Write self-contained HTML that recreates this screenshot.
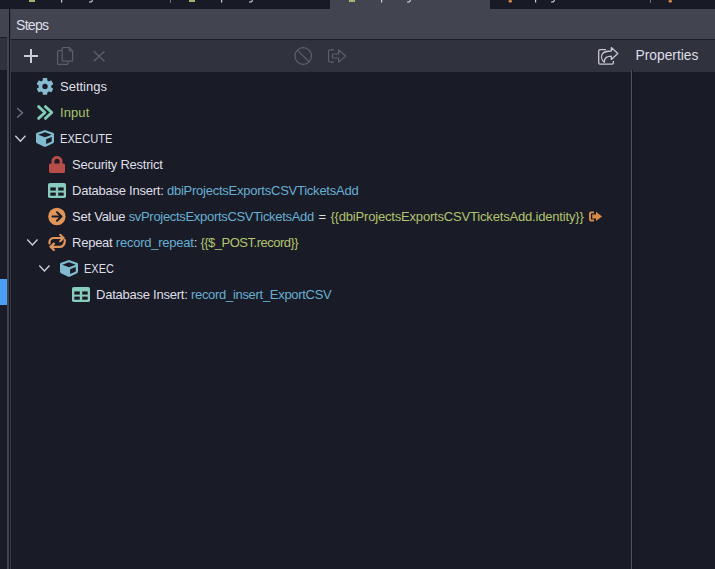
<!DOCTYPE html>
<html><head><meta charset="utf-8">
<style>
*{margin:0;padding:0;box-sizing:border-box}
html,body{width:715px;height:569px;overflow:hidden;background:#191b26;font-family:"Liberation Sans",sans-serif;font-size:13px;color:#e2e2ea}
.abs{position:absolute}
#tabs{left:0;top:0;width:715px;height:9px;background:#181a25;overflow:hidden}
#atab{left:330px;top:0;width:160px;height:9px;background:#42444f}
#lhead{left:0;top:9px;width:7px;height:28px;background:#42444f}
#lline{left:0;top:37px;width:7px;height:1px;background:#1c1d27}
#ltool{left:0;top:38px;width:7px;height:32px;background:#30323e}
#split1{left:7px;top:9px;width:2px;height:560px;background:#42444f}
#split2{left:9px;top:9px;width:1px;height:560px;background:#15161f}
#split3{left:10px;top:9px;width:1px;height:560px;background:#373945}
#head{left:11px;top:9px;width:704px;height:30px;background:#42444f}
#hline{left:11px;top:39px;width:704px;height:1px;background:#1c1d27}
#tool{left:11px;top:40px;width:704px;height:32px;background:#30323e}
#ptool{left:631px;top:40px;width:84px;height:30px;background:#30323e}
#pline{left:631px;top:70px;width:1px;height:499px;background:#50525e}
#pline2{left:632px;top:70px;width:1px;height:499px;background:#15161f}
#bluebar{left:0;top:279px;width:7px;height:26px;background:#4a9ff5}
.t{position:absolute;white-space:nowrap;line-height:16px;letter-spacing:-0.24px}
.w{color:#dfdfe7}
.b{color:#68afd3}
.y{color:#b3c46e}
.g{color:#a8c46c}
svg{position:absolute;left:0;top:0}
</style></head><body>
<div id="tabs" class="abs"></div>
<div id="atab" class="abs"></div>
<div id="lhead" class="abs"></div>
<div id="lline" class="abs"></div>
<div id="ltool" class="abs"></div>
<div id="bluebar" class="abs"></div>
<div id="split1" class="abs"></div>
<div id="split2" class="abs"></div>
<div id="split3" class="abs"></div>
<div id="head" class="abs"></div>
<div id="hline" class="abs"></div>
<div id="tool" class="abs"></div>
<div id="ptool" class="abs"></div>
<div id="pline" class="abs"></div>
<div id="pline2" class="abs"></div>

<div class="t w" style="left:16px;top:16.5px;font-size:14px;letter-spacing:-0.7px">Steps</div>
<div class="t w" style="left:635.5px;top:47.5px;font-size:13.8px;letter-spacing:0px">Properties</div>

<div class="t w" style="left:60px;top:79px;letter-spacing:0">Settings</div>
<div class="t g" style="left:60px;top:105px;letter-spacing:0.1px">Input</div>
<div class="t w" style="left:60px;top:131px;letter-spacing:0;transform:scaleX(0.855);transform-origin:0 0">EXECUTE</div>
<div class="t w" style="left:72px;top:157px">Security Restrict</div>
<div class="t w" style="left:72px;top:183px">Database Insert: <span class="b">dbiProjectsExportsCSVTicketsAdd</span></div>
<div class="t w" style="left:72px;top:209px">Set Value <span class="b" style="letter-spacing:-0.31px">svProjectsExportsCSVTicketsAdd</span><span style="word-spacing:1.2px"> = </span><span class="y" style="letter-spacing:-0.18px">{{dbiProjectsExportsCSVTicketsAdd.identity}}</span></div>
<div class="t w" style="left:72px;top:235px">Repeat <span class="b">record_repeat</span>: <span class="y" style="letter-spacing:-0.5px">{{$_POST.record}}</span></div>
<div class="t w" style="left:84px;top:261px;letter-spacing:0;transform:scaleX(0.845);transform-origin:0 0">EXEC</div>
<div class="t w" style="left:96px;top:287px">Database Insert: <span class="b" style="letter-spacing:-0.3px">record_insert_ExportCSV</span></div>

<svg width="715" height="569" viewBox="0 0 715 569" fill="none">
 <!-- tab strip bits -->
 <g fill="#9cb86a">
  <rect x="29" y="0" width="6" height="2"/><rect x="189" y="0" width="6" height="2"/><rect x="349" y="0" width="6" height="2"/>
 </g>
 <g fill="#d88a48"><rect x="508.5" y="0" width="3.5" height="2.5" rx="1.5"/><rect x="668.5" y="0" width="3.5" height="2.5" rx="1.5"/></g>
 <g fill="#6a6c78"><rect x="170" y="0" width="1" height="3"/><rect x="650" y="0" width="1" height="3"/></g>
 <g fill="#d0d0d8">
  <rect x="61" y="0" width="1.2" height="2.5"/><rect x="221" y="0" width="1.2" height="2.5"/><rect x="381" y="0" width="1.2" height="2.5"/><rect x="535" y="0" width="1.2" height="2.5"/>
  </g><g stroke="#d0d0d8" stroke-width="1.1" fill="none"><path d="M92.3 0V0.6Q92 2.1 89.2 2.1M252.3 0V0.6Q252 2.1 249.2 2.1M410.3 0V0.6Q410 2.1 407.2 2.1M554.3 0V0.6Q554 2.1 551.2 2.1"/>
 </g>

 <!-- toolbar -->
 <g stroke="#cdcdd5" stroke-width="2"><path d="M24 56H38M31 49V63"/></g>
 <g stroke="#5c5e6a" stroke-width="1.2" stroke-linejoin="round">
  <path d="M61.7 50.6H58.6Q57.6 50.6 57.6 51.6V63.4Q57.6 64.4 58.6 64.4H67Q68 64.4 68 63.4V61.7"/>
  <path d="M63.2 47.5H69.2L72.6 50.9V60.2Q72.6 61.2 71.6 61.2H63.2Q62.2 61.2 62.2 60.2V48.5Q62.2 47.5 63.2 47.5Z"/>
  <path d="M69.2 47.5V49.9Q69.2 50.9 70.2 50.9H72.6"/>
 </g>
 <g stroke="#5c5e6a" stroke-width="1.5"><path d="M93.8 51.3L104.5 61.2M104.5 51.3L93.8 61.2"/></g>
 <g stroke="#5c5e6a" stroke-width="1.3">
  <circle cx="303.2" cy="56" r="8.3"/><path d="M297.3 50.1L309.1 61.9"/>
 </g>
 <g stroke="#5c5e6a" stroke-width="1.2" stroke-linejoin="round">
  <path d="M334 49.9H330Q328.5 49.9 328.5 51.4V60.6Q328.5 62.1 330 62.1H334"/>
  <path d="M333.2 54H338.6V49.9L345.7 56L338.6 62.1V58H333.2Q332.4 58 332.4 57.2V54.8Q332.4 54 333.2 54Z"/>
 </g>
 <g stroke="#c8c8d0" stroke-width="1.3" stroke-linejoin="round" stroke-linecap="round">
  <path d="M605.5 49.6H600Q598.7 49.6 598.7 50.9V62.8Q598.7 64.1 600 64.1H612.1Q613.4 64.1 613.4 62.8V61.3"/>
  <path d="M611.3 47.6L617.8 53.5L611.3 59.4V56.2C607 56.2 604 58 604.3 62.2C601.5 60 600.8 56.5 602.3 54C604 51.5 607.5 51 611.3 51Z"/>
 </g>

 <!-- tree chevrons -->
 <g stroke="#75778a" stroke-width="1.3"><path d="M17.2 108.2L22.5 112.8L17.2 117.4"/></g>
 <g stroke="#d2d2de" stroke-width="1.3">
  <path d="M15.3 135.7L20.4 141.2L25.5 135.7"/>
  <path d="M27.3 239.5L32.4 245L37.5 239.5"/>
  <path d="M39.3 265.5L44.4 271L49.5 265.5"/>
 </g>

 <!-- gear -->
 <g fill="#86bcd0" transform="translate(45 86.4)">
  <circle r="6.4"/>
  <rect x="-2.2" y="-8.4" width="4.4" height="16.8" rx="0.6"/>
  <rect x="-2.2" y="-8.4" width="4.4" height="16.8" rx="0.6" transform="rotate(60)"/>
  <rect x="-2.2" y="-8.4" width="4.4" height="16.8" rx="0.6" transform="rotate(120)"/>
  <circle r="2.7" fill="#191b26"/>
 </g>
 <!-- double chevron -->
 <g stroke="#82ccb9" stroke-width="2.8" stroke-linecap="round" stroke-linejoin="round">
  <path d="M38.6 106.6L45 112.5L38.6 118.4"/>
  <path d="M45.4 106.6L51.8 112.5L45.4 118.4"/>
 </g>
 <!-- cube -->
 <path fill="#82bbd0" fill-rule="evenodd" transform="translate(36 130) scale(0.03516 0.0332)" d="M239.1 6.3l-208 78c-18.7 7-31.1 24.9-31.1 45v225.1c0 18.2 10.3 34.8 26.5 42.9l208 104c13.5 6.8 29.4 6.8 42.9 0l208-104c16.3-8.1 26.5-24.8 26.5-42.9V129.3c0-20-12.4-37.9-31.1-44.9l-208-78C262 2.2 250 2.2 239.1 6.3zM256 68.4l192 72v1.1l-192 78-192-78v-1.1l192-72zm32 356V275.5l160-65v133.9l-160 80z"/>
 <path fill="#82bbd0" fill-rule="evenodd" transform="translate(60 260) scale(0.03516 0.0332)" d="M239.1 6.3l-208 78c-18.7 7-31.1 24.9-31.1 45v225.1c0 18.2 10.3 34.8 26.5 42.9l208 104c13.5 6.8 29.4 6.8 42.9 0l208-104c16.3-8.1 26.5-24.8 26.5-42.9V129.3c0-20-12.4-37.9-31.1-44.9l-208-78C262 2.2 250 2.2 239.1 6.3zM256 68.4l192 72v1.1l-192 78-192-78v-1.1l192-72zm32 356V275.5l160-65v133.9l-160 80z"/>
 <!-- lock -->
 <path fill="#b84c48" transform="translate(49 156) scale(0.0357 0.0332)" d="M400 224h-24v-72C376 68.2 307.8 0 224 0S72 68.2 72 152v72H48c-26.5 0-48 21.5-48 48v192c0 26.5 21.5 48 48 48h352c26.5 0 48-21.5 48-48V272c0-26.5-21.5-48-48-48zm-104 0H152v-72c0-39.7 32.3-72 72-72s72 32.3 72 72v72z"/>
 <!-- tables -->
 <g id="tbl" transform="translate(48 183)">
  <rect x="0" y="0" width="18" height="15" rx="1.8" fill="#88ccbc"/>
  <g fill="#191b26">
   <rect x="2.3" y="4.4" width="5.5" height="3.2"/><rect x="10.2" y="4.4" width="5.5" height="3.2"/>
   <rect x="2.3" y="9.6" width="5.5" height="3.1"/><rect x="10.2" y="9.6" width="5.5" height="3.1"/>
  </g>
 </g>
 <use href="#tbl" transform="translate(24 104)"/>
 <!-- orange circle arrow -->
 <circle cx="56.9" cy="216.5" r="8.7" fill="#e0965a"/>
 <g stroke="#191b26" stroke-width="2" stroke-linecap="round" stroke-linejoin="round">
  <path d="M52.5 216.5H61.5M57 212.3L61.5 216.5L57 220.7"/>
 </g>
 <!-- repeat -->
 <g stroke="#e0965a" stroke-width="2.2" stroke-linecap="round" stroke-linejoin="round">
  <path d="M49.5 243.5V242C49.5 239.6 51.5 238 54 238H63.5"/>
  <path d="M60.2 234.8L63.5 238L60.2 241.2"/>
  <path d="M64.8 240V241.3C64.8 243.8 62.8 246.8 60.3 246.8H50.6"/>
  <path d="M53.9 243.6L50.6 246.8L53.9 250"/>
 </g>
 <!-- orange sign-out small -->
 <g fill="#d88a48">
  <path d="M594 211.4H591.2Q589 211.4 589 213.6V219.2Q589 221.4 591.2 221.4H594V219.5H591.5Q590.9 219.5 590.9 218.9V213.9Q590.9 213.3 591.5 213.3H594Z"/>
  <path d="M592.2 214.4H596V211.8L602.1 216.5L596 221.1V218.5H592.2Z"/>
 </g>
</svg>
</body></html>
